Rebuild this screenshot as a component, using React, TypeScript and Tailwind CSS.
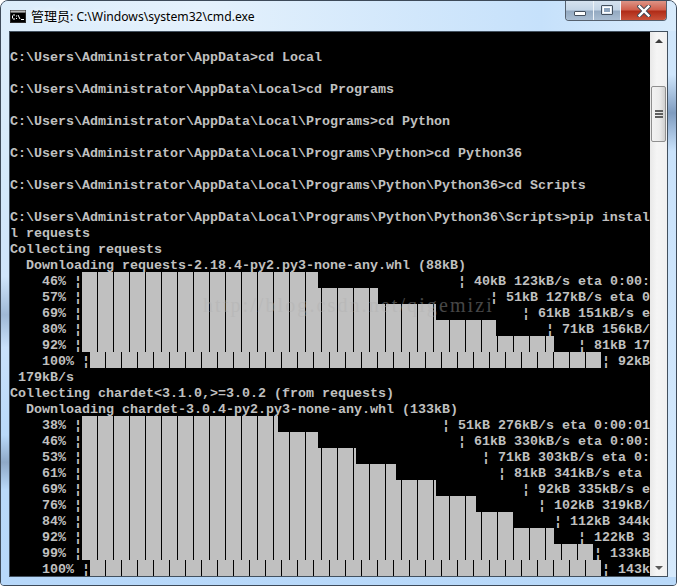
const mono = "font-['Liberation_Mono',monospace]";

const Text = ({ t }: { t: string }) => (
  <div className="h-4 whitespace-pre">{t || " "}</div>
);

const Bar = ({ label, bar, gap, tail }: { label: string; bar: string; gap: string; tail: string }) => (
  <div className="h-4 flex whitespace-pre">
    <span>{label}</span>
    <div className={`h-4 shrink-0 bg-[repeating-linear-gradient(90deg,#c0c0c0_0,#c0c0c0_15px,#000_15px,#000_16px)] ${bar} ${gap}`} />
    <span>{tail}</span>
  </div>
);

function CmdIcon() {
  return (
    <svg width="16" height="14" viewBox="0 0 16 14" className="shrink-0">
      <rect x="0" y="0" width="16" height="13" fill="#2a2a2a" />
      <rect x="0.5" y="0.5" width="15" height="2" fill="#b9b9b9" />
      <rect x="1" y="3" width="14" height="9" fill="#000" />
      <path d="M3 5h2M2.5 5.5v3M3 9h2M6 6h1M6 8.5h1M8 5l2 4M11 9.5h3" stroke="#fff" strokeWidth="1" fill="none" />
    </svg>
  );
}

function CaptionButtons() {
  return (
    <div className="flex h-5 shrink-0 rounded-b-[4px] border border-t-0 border-[#55606e] overflow-hidden">
      <div className="w-[28px] flex items-center justify-center border-r border-[#eef3f8] bg-[linear-gradient(180deg,#d5e2ef_0,#c3d4e6_48%,#93a9c1_52%,#a9bdd2_100%)]">
        <div className="w-[12px] h-[5px] mt-[5px] bg-white border border-[#44505e] rounded-[1px]" />
      </div>
      <div className="w-[27px] flex items-center justify-center border-r border-[#eef3f8] bg-[linear-gradient(180deg,#d5e2ef_0,#c3d4e6_48%,#93a9c1_52%,#a9bdd2_100%)]">
        <div className="w-[12px] h-[10px] bg-[#dfe8f2] border border-[#44505e] rounded-[1px] flex items-center justify-center mb-[1px]">
          <div className="w-[8px] h-[6px] bg-[#8ea4bd] border border-[#ffffff]" />
        </div>
      </div>
      <div className="w-[45px] flex items-center justify-center bg-[linear-gradient(180deg,#dd9486_0,#d0604d_46%,#b02c18_54%,#c9523a_100%)]">
        <svg width="14" height="12" viewBox="0 0 14 12">
          <path d="M2.5 1.5l9 9M11.5 1.5l-9 9" stroke="#3f4a57" strokeWidth="4.2" strokeLinecap="square" />
          <path d="M2.5 1.5l9 9M11.5 1.5l-9 9" stroke="#fff" strokeWidth="2.4" strokeLinecap="square" />
        </svg>
      </div>
    </div>
  );
}

function Scrollbar() {
  return (
    <div className="w-[17px] shrink-0 flex flex-col items-center bg-[linear-gradient(90deg,#e8e8e8,#f5f5f5_40%,#f0f0f0)]">
      <div className="h-[17px] w-full flex items-center justify-center shrink-0">
        <div className="w-0 h-0 mt-[1px] border-x-[4px] border-x-transparent border-b-[4px] border-b-[#3c3c3c]" />
      </div>
      <div className="h-[37px] shrink-0" />
      <div className="h-[56px] w-[15px] shrink-0 rounded-[2px] border border-[#8f8f8f] bg-[linear-gradient(90deg,#f3f3f3,#ececec_55%,#cfcfcf)] flex flex-col items-center justify-center gap-[1px]">
        <div className="w-[8px] h-[2px] bg-[#5f5f5f]" />
        <div className="w-[8px] h-[2px] bg-[#5f5f5f]" />
        <div className="w-[8px] h-[2px] bg-[#5f5f5f]" />
      </div>
      <div className="flex-1" />
      <div className="h-[17px] w-full flex items-center justify-center shrink-0">
        <div className="w-0 h-0 border-x-[4px] border-x-transparent border-t-[4px] border-t-[#5a5a5a]" />
      </div>
    </div>
  );
}

export default function App() {
  return (
    <div className="w-[677px] h-[586px] bg-white overflow-hidden">
      <div className="w-[677px] h-[586px] flex flex-col rounded-t-[8px] rounded-b-[4px] border border-[#3d4a59] overflow-hidden bg-[#b9d9f9]">
        <div className="h-[30px] shrink-0 flex items-start justify-between pl-[9px] pr-[9px] bg-[linear-gradient(90deg,#dcedfb,#e4f1fc_30%,#c6e1fb_80%,#d8ebfc)]">
          <div className="flex items-center gap-[5px] h-[30px] pt-[2px]">
            <CmdIcon />
            <span className="text-[12.15px] text-black font-['Noto_Sans','Noto_Sans_CJK_SC',sans-serif] [text-shadow:0_0_6px_#fff]">
              <span className="text-[13px]">管理员</span>: C:\Windows\system32\cmd.exe
            </span>
          </div>
          <CaptionButtons />
        </div>
        <div className="flex h-[546px] shrink-0">
          <div className="w-[8px] shrink-0 bg-[linear-gradient(180deg,#dcedfb_0,#cfe5fb_45%,#9fb9d6_52%,#c9e1fa_58%,#b9d9f9_74%,#8fa9c8_79%,#b9d9f9_84%,#b7d8fa_100%)]" />
          <div className="flex flex-1 border-l border-t border-r border-b border-[#42505e] min-w-0">
            <div className={`relative w-[640px] shrink-0 overflow-hidden bg-black text-[#c0c0c0] text-[13.333px] leading-[20px] font-bold ${mono}`}>
              <Text t="" />
              <Text t="C:\Users\Administrator\AppData>cd Local" />
              <Text t="" />
              <Text t="C:\Users\Administrator\AppData\Local>cd Programs" />
              <Text t="" />
              <Text t="C:\Users\Administrator\AppData\Local\Programs>cd Python" />
              <Text t="" />
              <Text t="C:\Users\Administrator\AppData\Local\Programs\Python>cd Python36" />
              <Text t="" />
              <Text t="C:\Users\Administrator\AppData\Local\Programs\Python\Python36>cd Scripts" />
              <Text t="" />
              <Text t="C:\Users\Administrator\AppData\Local\Programs\Python\Python36\Scripts>pip instal" />
              <Text t="l requests" />
              <Text t="Collecting requests" />
              <Text t="  Downloading requests-2.18.4-py2.py3-none-any.whl (88kB)" />
              <Bar label="    46% ¦" bar="w-[236px]" gap="mr-[140px]" tail="¦ 40kB 123kB/s eta 0:00:" />
              <Bar label="    57% ¦" bar="w-[296px]" gap="mr-[112px]" tail="¦ 51kB 127kB/s eta 0" />
              <Bar label="    69% ¦" bar="w-[354px]" gap="mr-[86px]" tail="¦ 61kB 151kB/s e" />
              <Bar label="    80% ¦" bar="w-[414px]" gap="mr-[50px]" tail="¦ 71kB 156kB/" />
              <Bar label="    92% ¦" bar="w-[472px]" gap="mr-[24px]" tail="¦ 81kB 17" />
              <Bar label="    100% ¦" bar="w-[511px]" gap="mr-[1px]" tail="¦ 92kB" />
              <Text t=" 179kB/s" />
              <Text t="Collecting chardet<3.1.0,>=3.0.2 (from requests)" />
              <Text t="  Downloading chardet-3.0.4-py2.py3-none-any.whl (133kB)" />
              <Bar label="    38% ¦" bar="w-[196px]" gap="mr-[164px]" tail="¦ 51kB 276kB/s eta 0:00:01" />
              <Bar label="    46% ¦" bar="w-[236px]" gap="mr-[140px]" tail="¦ 61kB 330kB/s eta 0:00:" />
              <Bar label="    53% ¦" bar="w-[274px]" gap="mr-[126px]" tail="¦ 71kB 303kB/s eta 0:" />
              <Bar label="    61% ¦" bar="w-[314px]" gap="mr-[102px]" tail="¦ 81kB 341kB/s eta" />
              <Bar label="    69% ¦" bar="w-[354px]" gap="mr-[86px]" tail="¦ 92kB 335kB/s e" />
              <Bar label="    76% ¦" bar="w-[394px]" gap="mr-[62px]" tail="¦ 102kB 319kB/" />
              <Bar label="    84% ¦" bar="w-[431px]" gap="mr-[41px]" tail="¦ 112kB 344k" />
              <Bar label="    92% ¦" bar="w-[472px]" gap="mr-[24px]" tail="¦ 122kB 3" />
              <Bar label="    99% ¦" bar="w-[511px]" gap="mr-[1px]" tail="¦ 133kB" />
              <Bar label="    100% ¦" bar="w-[511px]" gap="mr-[1px]" tail="¦ 143k" />
              <div className="absolute left-[193px] top-[261px] text-[20px] leading-[24px] font-normal tracking-[2.1px] whitespace-nowrap text-[#b0b0b0] opacity-40 font-['Liberation_Serif',serif]">
                http://blog.csdn.net/qigemizi
              </div>
            </div>
            <Scrollbar />
          </div>
          <div className="w-[8px] shrink-0 bg-[linear-gradient(180deg,#d0e6fb_0,#cfe6fc_8%,#7f9cc0_15%,#c9e2fb_22%,#d5e9fc_100%)]" />
        </div>
        <div className="flex-1 bg-[linear-gradient(90deg,#b7d8fa,#b9d9f9)]" />
      </div>
    </div>
  );
}
